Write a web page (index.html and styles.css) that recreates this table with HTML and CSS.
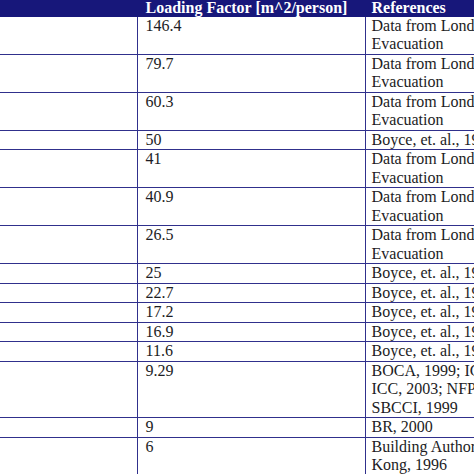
FILE: index.html
```html
<!DOCTYPE html>
<html>
<head>
<meta charset="utf-8">
<link rel="stylesheet" href="styles.css">
</head>
<body>
<div class="frame">
<table class="factors">
<colgroup><col class="c1"><col class="c2"><col class="c3"></colgroup>
<thead>
<tr><th></th><th>Loading Factor [m^2/person]</th><th>References</th></tr>
</thead>
<tbody>
<tr><td></td><td>146.4</td><td>Data from London Evacuation</td></tr>
<tr><td></td><td>79.7</td><td>Data from London Evacuation</td></tr>
<tr><td></td><td>60.3</td><td>Data from London Evacuation</td></tr>
<tr><td></td><td>50</td><td>Boyce, et. al., 1999</td></tr>
<tr><td></td><td>41</td><td>Data from London Evacuation</td></tr>
<tr><td></td><td>40.9</td><td>Data from London Evacuation</td></tr>
<tr><td></td><td>26.5</td><td>Data from London Evacuation</td></tr>
<tr><td></td><td>25</td><td>Boyce, et. al., 1999</td></tr>
<tr><td></td><td>22.7</td><td>Boyce, et. al., 1999</td></tr>
<tr><td></td><td>17.2</td><td>Boyce, et. al., 1999</td></tr>
<tr><td></td><td>16.9</td><td>Boyce, et. al., 1999</td></tr>
<tr><td></td><td>11.6</td><td>Boyce, et. al., 1999</td></tr>
<tr><td></td><td>9.29</td><td>BOCA, 1999; ICBO, 1997; ICC, 2003; NFPA, 2003; SBCCI, 1999</td></tr>
<tr><td></td><td>9</td><td>BR, 2000</td></tr>
<tr><td></td><td>6</td><td>Building Authority, Hong Kong, 1996</td></tr>
</tbody>
</table>
</div>
</body>
</html>
```

FILE: styles.css
```css
html, body {
  margin: 0;
  padding: 0;
  background: #ffffff;
}
.frame {
  width: 474px;
  height: 474px;
  overflow: hidden;
}
.factors {
  border-collapse: collapse;
  table-layout: fixed;
  width: 560px;
  margin-top: -2px;
  font-family: "Liberation Serif", "Times New Roman", serif;
  font-size: 16px;
  line-height: 18.5px;
  color: #1c1c24;
}
.c1 { width: 137px; }
.c2 { width: 228px; }
.c3 { width: 195px; }
.factors th,
.factors td {
  border: 1px solid #30308c;
  padding: 0 4px 0 8px;
  vertical-align: top;
  text-align: left;
}
.factors th {
  background: #17177a;
  color: #ffffff;
  font-weight: bold;
  line-height: 14.5px;
  padding-top: 2px;
  border-color: #17177a;
}
.factors th:first-child,
.factors td:first-child {
  border-left: 0;
}
.factors th:nth-child(3),
.factors td:nth-child(3) {
  padding-left: 6px;
}
```
